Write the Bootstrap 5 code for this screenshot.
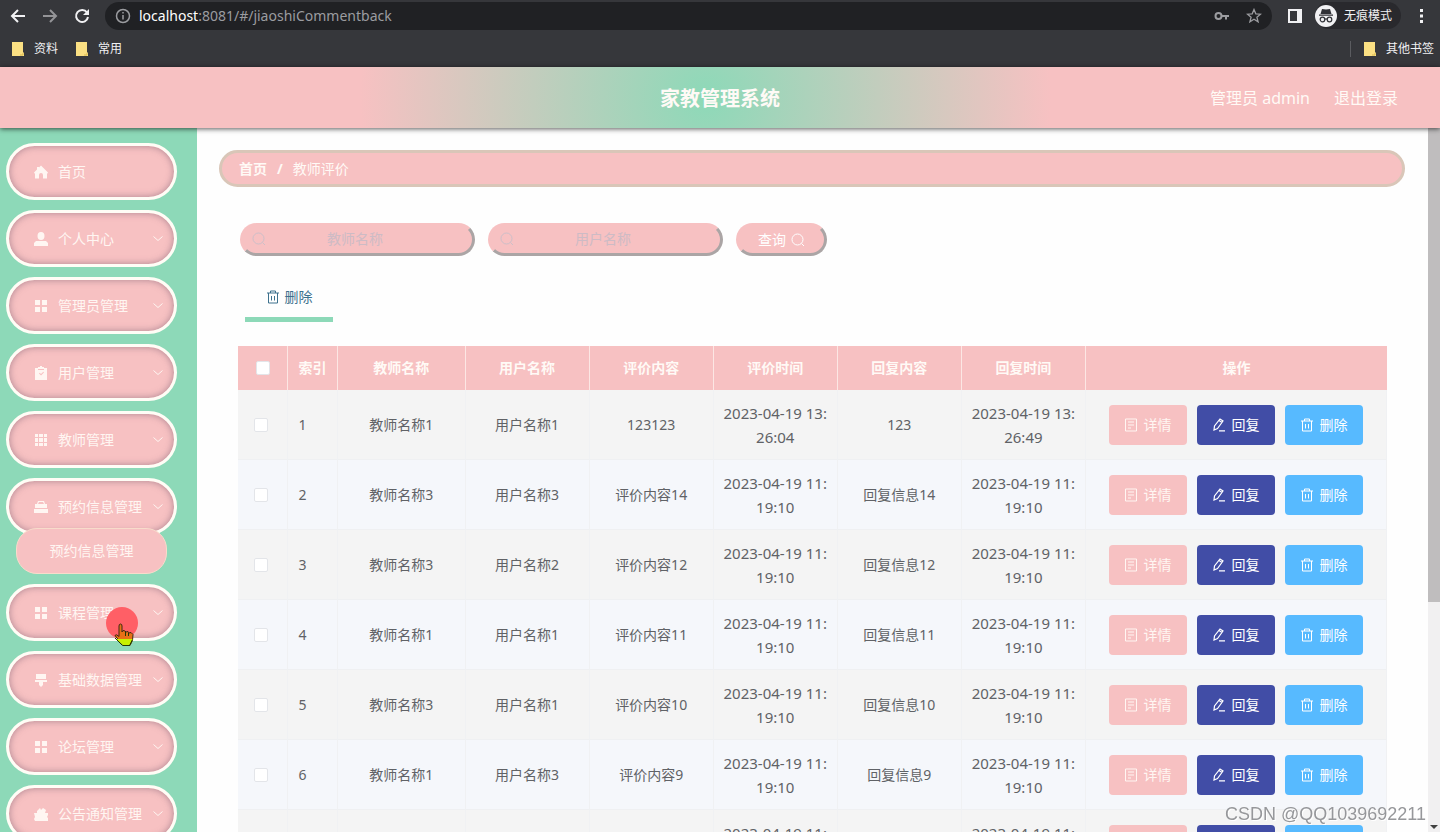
<!DOCTYPE html>
<html lang="zh-CN">
<head>
<meta charset="utf-8">
<meta name="viewport" content="width=device-width, initial-scale=1">
<title>家教管理系统</title>
<link href="https://cdn.jsdelivr.net/npm/bootstrap@5.3.0/dist/css/bootstrap.min.css" rel="stylesheet">
<style>
:root { --pink: #f7c1c2; --mint: #8dd9b8; --chrome: #36373b; }
body { font: 14px/24px "Noto Sans", "Noto Sans CJK SC", sans-serif; color: #606266; background: #fefefe; }
button, input { font-family: inherit; }
svg { fill: none; stroke: currentColor; flex: none; }
a { color: inherit; text-decoration: none; }

/* browser bars */
.browser { background: var(--chrome); color: #f1f1f3; font-size: 12px; height: 67px; flex: none; }
.browser button, .browser a { background: none; border: 0; padding: 0; color: inherit; display: flex; align-items: center; }
.tools { height: 31px; padding: 0 16px 0 10px; gap: 16px; }
.address { background: #202124; border-radius: 15px; height: 28px; padding: 0 10px; margin-left: -1px; color: #9b9ca0; font-size: 14px; gap: 8px; min-width: 0; }
.address span b { color: #fff; font-weight: 400; }
.private { background: #29292d; border-radius: 14px; height: 27px; padding-right: 9px; gap: 7px; margin: 0 3px 0 -3px; }
.marks { height: 35px; padding: 0 6px 0 11px; gap: 17px; }
.marks a { gap: 9px; }
.marks .other { border-left: 1px solid #5b5c60; height: 16px; padding-left: 12px; }

/* page header */
.topbar { height: 61px; flex: none; z-index: 2; color: #fffaf6; box-shadow: 0 1px 5px rgba(0,0,0,.65); padding: 0 42px;
  background: radial-gradient(circle at 49% 50%, var(--mint), var(--pink) 47%); }
.topbar h1 { font-size: 20px; line-height: 28px; font-weight: 700; padding-top: 2px; }
.topbar .account { font-size: 16px; gap: 24px; }

/* side menu */
.sidebar { width: 197px; flex: none; background: var(--mint); padding: 15px 20px 0 6px; overflow: hidden; }
.menu-item { height: 57px; width: 100%; flex: none; border: 3px solid #fffdf6; border-radius: 29px; background: var(--pink); color: #fff6f2; margin-bottom: 10px; padding: 0 11px 0 25px;
  box-shadow: inset 0 0 7px rgba(120,90,110,.6); gap: 10px; font-size: 14px; }
.menu-item .arrow { margin-left: auto; }
.submenu { height: 46px; flex: none; background: var(--pink); border: 1px solid #f8dccb; border-radius: 21px; margin: -17px 10px 10px; color: #fff6f2; z-index: 1; }
.pointer { left: 97px; top: 20px; pointer-events: none; stroke: none; }

/* content */
.content { padding: 22px 23px 0 22px; min-width: 0; }
.crumbs { height: 37px; border: 3px solid #d9c6b8; border-radius: 19px; background: var(--pink); color: #fffaf6; padding: 0 17px; margin: 0; --bs-breadcrumb-divider-color: #fffaf6; --bs-breadcrumb-item-padding-x: 10px; }
.crumbs .active { color: inherit; }
.crumbs .breadcrumb-item + .breadcrumb-item::before { font-weight: 700; }
.panel { padding: 36px 18px 0 19px; }
.filters { gap: 13px; padding-left: 2px; }
.raised { border: 3px solid; border-color: var(--pink) #aba5a5 #aba5a5 var(--pink); border-radius: 17px; background: var(--pink); height: 33px; }
.searchbox { width: 235px; color: #cdbfc8; padding: 0 10px 2px 9px; }
.searchbox input { background: none; border: 0; outline: 0; min-width: 0; width: 100%; padding: 0 18px 0 0; text-align: center; font-size: 14px; height: 24px; color: #606266; }
.searchbox input::placeholder { color: #cdbbc5; opacity: 1; }
.query { width: 91px; color: #fff; padding: 0; font-size: 14px; gap: 5px; }
.remove-tab { width: 88px; height: 47px; margin: 19px 0 0 7px; border: 0; border-bottom: 5px solid var(--mint); background: none; color: #3d718d; gap: 5px; padding: 2px 0 0; }

.records { table-layout: fixed; width: 100%; margin-top: 24px; text-align: center; border-collapse: separate; border-spacing: 0; }
.records th { height: 44px; background: var(--pink); color: #fffaf6; font-weight: 700; border-right: 1px solid #fce7e4; padding: 0; }
.records th:last-child { border-right: 0; }
.records td { height: 70px; padding: 0; border-right: 1px solid #f0f1f3; border-bottom: 1px solid #eff0f2; background: #f4f4f4; }
.records tr:nth-child(even) td { background: #f5f7fb; }
.records .date { font-size: 15px; white-space: nowrap; }
.records .num { padding-right: 20px; }
.records .pick { padding-right: 3px; }
.w-narrow { width: 50px; } .w-name { width: 11.1%; } .w-mid { width: 10.8%; }
.records .form-check-input { width: 14px; height: 14px; margin: 0 0 2px; border-radius: 2px; border-color: #e3e5e9; vertical-align: middle; background-color: #fff; }
.ops { gap: 10px; }
.op { width: 78px; height: 40px; border: 0; border-radius: 4px; color: #fff; padding: 0; gap: 5px; }
.op-view { background: var(--pink); color: #fff6f2; } .op-reply { background: #414da6; } .op-del { background: #57baff; }

.track { width: 12px; flex: none; background: #f1f0f1; }
.thumb { height: 67.4%; background: #bfbdbe; }
.watermark { right: 14px; bottom: 5px; z-index: 5; font: 18px/26px "Liberation Sans", sans-serif; color: #96979a; text-shadow: 1px 1px 0 #fff; }
</style>
</head>
<body class="vh-100 overflow-hidden d-flex flex-column">

<svg width="0" height="0" class="position-absolute" aria-hidden="true">
  <symbol id="i-home" viewBox="0 0 14 14"><path fill="currentColor" stroke="none" d="M7 .500 14 7.500 13 9v4.500H9V10a2 2 0 0 0-4 0v3.500H1V9L0 7.500l3-3V2h2v.500z"/></symbol>
  <symbol id="i-user" viewBox="0 0 14 14"><path fill="currentColor" stroke="none" d="M7 0a3.500 4 0 0 1 0 8 3.500 4 0 0 1 0-8zM2 9h10l2 2v3H0v-3z"/></symbol>
  <symbol id="i-grid" viewBox="0 0 14 14"><path fill="currentColor" stroke="none" d="M1 1h5v5H1zM8 1h5v5H8zM1 8h5v5H1zM8 8h5v5H8z"/></symbol>
  <symbol id="i-clip" viewBox="0 0 14 14"><path fill="currentColor" stroke="none" fill-rule="evenodd" d="M1 2h3V1h2V0h2v1h2v1h3v12H1zM4 3v1h6V3zM5 7.500l2 2 3-3-.700-.700L7 8 5.700 6.800z"/></symbol>
  <symbol id="i-nine" viewBox="0 0 14 14"><path fill="currentColor" stroke="none" d="M1 1h3v3H1zM5 1h4v3H5zM10 1h3v3h-3zM1 5h3v4H1zM5 5h4v4H5zM10 5h3v4h-3zM1 10h3v3H1zM5 10h4v3H5zM10 10h3v3h-3z"/></symbol>
  <symbol id="i-case" viewBox="0 0 14 14"><path fill="currentColor" stroke="none" fill-rule="evenodd" d="M4 1h6l1 3h2v4H1V4h2zM5 2 4 4h6L9 2zM0 9h14v4H0z"/></symbol>
  <symbol id="i-brush" viewBox="0 0 14 14"><path fill="currentColor" stroke="none" d="M2 1h10v5H2zM1 7h12v2H9v3l-2 2-2-2V9H1z"/></symbol>
  <symbol id="i-puzzle" viewBox="0 0 14 14"><path fill="currentColor" stroke="none" d="M0 6h3V4l3-3 1 2 2-2 3 2-1 3h3v2l-1 2 1 1v3H1l-1-2 1-2z"/></symbol>
  <symbol id="i-down" viewBox="0 0 10 8"><path d="m.500 1.500 4.500 4 4.500-4"/></symbol>
  <symbol id="i-search" viewBox="0 0 14 14"><circle cx="6.500" cy="6.500" r="5.500"/><path d="m10.500 10.500 2.500 2.500"/></symbol>
  <symbol id="i-trash" viewBox="0 0 14 14"><path d="M1 3h12M4.500 3V1h5v2M2.500 3v10h9V3M5.500 6v4.500M8.500 6v4.500"/></symbol>
  <symbol id="i-doc" viewBox="0 0 14 14"><path d="M1.500 1h11v12h-11zM4 4h6M4 7h6M4 10h3"/></symbol>
  <symbol id="i-edit" viewBox="0 0 14 14"><path stroke-width="1.200" d="M2 12 2.500 8 8 1l3 2-5.500 7.500zM7 2.500l3 2M7 12.800h6"/></symbol>
  <symbol id="i-note" viewBox="0 0 12 14"><path fill="#fbe083" stroke="none" d="M0 0h11v10l1 1v3H0z"/><path stroke="#d8b850" d="M8 13h3v-2"/></symbol>
</svg>

<div class="browser">
  <div class="tools d-flex align-items-center">
    <button aria-label="后退"><svg width="16" height="16" stroke-width="2"><path d="M15 8H2M8 2 2 8l6 6"/></svg></button>
    <button aria-label="前进"><svg width="16" height="16" stroke-width="2" class="opacity-50"><path d="M1 8h13M8 2l6 6-6 6"/></svg></button>
    <button aria-label="刷新"><svg width="16" height="16" stroke-width="2"><path d="M13 4.500A6 6 0 1 0 14 9"/><path fill="currentColor" stroke="none" d="M15 1v6H9z"/></svg></button>
    <div class="address d-flex align-items-center flex-grow-1">
      <svg width="16" height="16" stroke-width="1.500"><circle cx="8" cy="8" r="6.500"/><path d="M8 7v4.500M8 4v1.500"/></svg>
      <span class="flex-grow-1"><b>localhost</b>:8081/#/jiaoshiCommentback</span>
      <button aria-label="密码"><svg width="16" height="12" stroke="#d5d6d9" stroke-width="2"><circle cx="4.500" cy="6" r="3"/><path d="M8 6h7M12 6v3.500"/></svg></button>
      <button aria-label="收藏" class="ms-2"><svg width="16" height="16" stroke="#d5d6d9" stroke-width="1.300"><path d="m8 1.500 1.800 4.300 4.700.400-3.600 3 1.200 4.600L8 11.300l-4.100 2.500 1.200-4.600-3.600-3 4.700-.400z"/></svg></button>
    </div>
    <button aria-label="侧边栏"><svg width="14" height="14"><path fill="#f1f1f3" fill-rule="evenodd" stroke="none" d="M0 0h14v14H0zM2 2v10h7V2z"/></svg></button>
    <div class="private d-flex align-items-center"><svg width="22" height="22"><circle cx="11" cy="11" r="11" fill="#f1f1f3" stroke="none"/><path fill="#303136" stroke="none" d="m7 4 4 .500L15 4l1.500 5h-11zM4 9.500h14v1.300H4z"/><g stroke="#303136" stroke-width="1.200"><circle cx="7.500" cy="14.500" r="2.300"/><circle cx="14.500" cy="14.500" r="2.300"/><path d="M9.500 14h3"/></g></svg>无痕模式</div>
    <button aria-label="菜单"><svg width="4" height="14"><path fill="#f1f1f3" stroke="none" d="M0 0h3v3H0zM0 5.500h3v3H0zM0 11h3v3H0z"/></svg></button>
  </div>
  <nav class="marks d-flex align-items-center" aria-label="书签">
    <a href="#"><svg width="14" height="14"><use href="#i-note"/></svg>资料</a>
    <a href="#"><svg width="14" height="14"><use href="#i-note"/></svg>常用</a>
    <a href="#" class="other ms-auto"><svg width="14" height="14"><use href="#i-note"/></svg>其他书签</a>
  </nav>
</div>

<header class="topbar position-relative d-flex align-items-center">
  <div class="col"></div>
  <h1 class="m-0">家教管理系统</h1>
  <div class="account col d-flex justify-content-end"><span>管理员 admin</span><a href="#">退出登录</a></div>
</header>

<div class="d-flex flex-grow-1 overflow-hidden">
  <nav class="sidebar d-flex flex-column" id="menu" aria-label="主菜单"></nav>

  <main class="content flex-grow-1 overflow-hidden">
    <ol class="breadcrumb crumbs align-items-center">
      <li class="breadcrumb-item"><a href="#" class="fw-bold">首页</a></li>
      <li class="breadcrumb-item active" aria-current="page">教师评价</li>
    </ol>
    <div class="panel">
      <form class="filters d-flex" onsubmit="return false">
        <label class="searchbox raised d-flex align-items-center"><svg width="14" height="14"><use href="#i-search"/></svg><input type="text" placeholder="教师名称" aria-label="教师名称"></label>
        <label class="searchbox raised d-flex align-items-center"><svg width="14" height="14"><use href="#i-search"/></svg><input type="text" placeholder="用户名称" aria-label="用户名称"></label>
        <button class="query raised d-flex align-items-center justify-content-center">查询<svg width="14" height="14"><use href="#i-search"/></svg></button>
      </form>
      <button class="remove-tab d-flex align-items-center justify-content-center"><svg width="14" height="14"><use href="#i-trash"/></svg>删除</button>
      <table class="records">
        <colgroup><col class="w-narrow"><col class="w-narrow"><col class="w-name"><col class="w-mid"><col class="w-mid"><col class="w-mid"><col class="w-mid"><col class="w-mid"><col></colgroup>
        <thead><tr><th><input type="checkbox" class="form-check-input" aria-label="全选"></th><th>索引</th><th>教师名称</th><th>用户名称</th><th>评价内容</th><th>评价时间</th><th>回复内容</th><th>回复时间</th><th>操作</th></tr></thead>
        <tbody id="rows"></tbody>
      </table>
    </div>
  </main>

  <div class="track d-flex flex-column justify-content-between align-items-center">
    <div class="thumb w-100"></div>
    <svg width="8" height="8"><path fill="#404040" stroke="none" d="M0 1h8L4 5z"/></svg>
  </div>
</div>
<div class="watermark position-fixed">CSDN @QQ1039692211</div>

<script>
const icon = (name, w = 14, h = 14, cls = '') => `<svg width="${w}" height="${h}" class="${cls}"><use href="#i-${name}"/></svg>`;

const hand = `<svg class="pointer position-absolute" width="34" height="40">
  <circle cx="16" cy="16" r="16" fill="#ff5f66"/>
  <path d="M13 19q0-2 1.500-2T16 19v6l1-1.500 2 .500 1 1 2-.500 1 1.500 2-.500 2 2-.500 6-2.500 5h-6l-5-5-4-5q1-2 4 1z" fill="#e77016" stroke="#3d2a12"/>
  <path d="M10 32h17l-3 6h-7z" fill="#c8f000"/>
  <path d="M9 31l7.500 7.500h7l3-6M19.500 25v4M22.500 26v3" fill="none" stroke="#263800"/></svg>`;

const menu = [
  ['home', '首页'], ['user', '个人中心'], ['grid', '管理员管理'], ['clip', '用户管理'], ['nine', '教师管理'],
  ['case', '预约信息管理', '预约信息管理'], ['grid', '课程管理'], ['brush', '基础数据管理'], ['grid', '论坛管理'], ['puzzle', '公告通知管理']
];
document.getElementById('menu').innerHTML = menu.map(([name, label, sub]) => `
  <a href="#" class="menu-item position-relative d-flex align-items-center">${icon(name)}${label}
    ${name === 'home' ? '' : icon('down', 10, 8, 'arrow')}${label === '课程管理' ? hand : ''}</a>
  ${sub ? `<a href="#" class="submenu position-relative d-flex align-items-center justify-content-center">${sub}</a>` : ''}`).join('');

const first = '2023-04-19 11:|19:10';
const records = [
  ['教师名称1', '用户名称1', '123123', '2023-04-19 13:|26:04', '123', '2023-04-19 13:|26:49'],
  ['教师名称3', '用户名称3', '评价内容14', first, '回复信息14', first],
  ['教师名称3', '用户名称2', '评价内容12', first, '回复信息12', first],
  ['教师名称1', '用户名称1', '评价内容11', first, '回复信息11', first],
  ['教师名称3', '用户名称1', '评价内容10', first, '回复信息10', first],
  ['教师名称1', '用户名称3', '评价内容9', first, '回复信息9', first],
  ['教师名称2', '用户名称2', '评价内容8', first, '回复信息8', first]
];
const op = (kind, name, label) => `<button class="op op-${kind} d-flex align-items-center justify-content-center">${icon(name)}${label}</button>`;
document.getElementById('rows').innerHTML = records.map((r, i) => `<tr>
  <td class="pick"><input type="checkbox" class="form-check-input" aria-label="选择第${i + 1}行"></td><td class="num">${i + 1}</td>
  ${r.map(v => `<td class="${v.includes('|') ? 'date' : ''}">${v.replace('|', '<br>')}</td>`).join('')}
  <td><div class="ops d-flex justify-content-center">${op('view', 'doc', '详情')}${op('reply', 'edit', '回复')}${op('del', 'trash', '删除')}</div></td></tr>`).join('');
</script>
<script src="https://cdn.jsdelivr.net/npm/bootstrap@5.3.0/dist/js/bootstrap.bundle.min.js"></script>
</body>
</html>
